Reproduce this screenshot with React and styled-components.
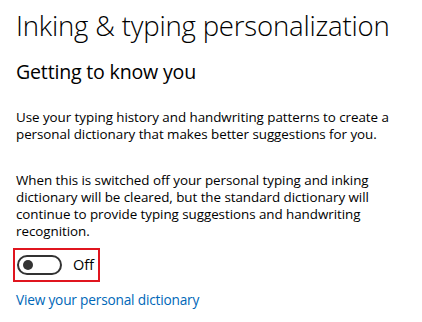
import React from "react";
import styled, { createGlobalStyle } from "styled-components";

const Global = createGlobalStyle`
  html, body { margin: 0; padding: 0; background: #fff; }
  body { font-family: "Open Sans", "Noto Sans", sans-serif; color: #000; }
`;

const Page = styled.div`
  padding: 8px 16px 0 16px;
  width: 422px;
  height: 322px;
  box-sizing: border-box;
  overflow: hidden;
`;

const Title = styled.h1`
  margin: 0;
  font-weight: 300;
  font-size: 27.6px;
  line-height: 34px;
  letter-spacing: -0.2px;
  white-space: nowrap;
`;

const Subtitle = styled.h2`
  margin: 18px 0 0 0;
  font-weight: 400;
  font-size: 19.6px;
  line-height: 24px;
  letter-spacing: -0.2px;
`;

const Para = styled.p`
  margin: ${(p) => p.$top}px 0 0 0;
  max-width: 380px;
  font-size: 13.4px;
  line-height: 17px;
  letter-spacing: -0.05px;
`;

const ToggleFrame = styled.div`
  margin: 8px 0 0 -3px;
  display: inline-flex;
  align-items: center;
  gap: 11px;
  box-sizing: border-box;
  height: 34px;
  width: 87px;
  border: 2px solid #e0151f;
  padding: 0 0 0 2px;
`;

const Pill = styled.div`
  box-sizing: border-box;
  width: 45px;
  height: 20px;
  border: 2px solid #333;
  border-radius: 10px;
  display: flex;
  align-items: center;
  padding-left: 4px;
`;

const Knob = styled.div`
  width: 10px;
  height: 10px;
  border-radius: 50%;
  background: #333;
`;

const ToggleLabel = styled.span`
  font-size: 14.5px;
  line-height: 20px;
`;

const Link = styled.a`
  display: block;
  margin-top: 9px;
  color: #0067b8;
  font-size: 13.7px;
  line-height: 18px;
  letter-spacing: -0.2px;
  text-decoration: none;
`;

export default function App() {
  return (
    <>
      <Global />
      <Page>
        <Title>Inking &amp; typing personalization</Title>
        <Subtitle>Getting to know you</Subtitle>
        <Para $top={25}>
          Use your typing history and handwriting patterns to create a
          personal dictionary that makes better suggestions for you.
        </Para>
        <Para $top={29}>
          When this is switched off your personal typing and inking
          dictionary will be cleared, but the standard dictionary will
          continue to provide typing suggestions and handwriting
          recognition.
        </Para>
        <div>
          <ToggleFrame>
            <Pill>
              <Knob />
            </Pill>
            <ToggleLabel>Off</ToggleLabel>
          </ToggleFrame>
        </div>
        <Link href="#">View your personal dictionary</Link>
      </Page>
    </>
  );
}
